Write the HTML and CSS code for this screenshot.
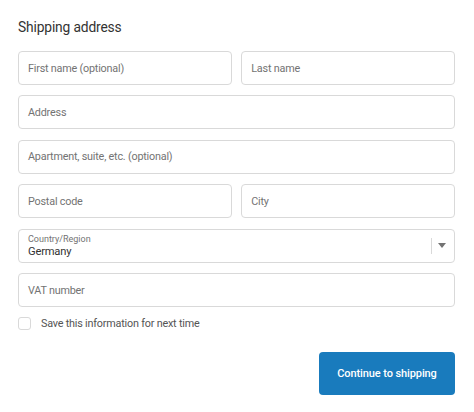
FILE: index.html
```html
<!DOCTYPE html>
<html>
<head>
<meta charset="utf-8">
<link rel="stylesheet" href="styles.css">
</head>
<body>
<div class="form">
  <h2 class="title">Shipping address</h2>
  <div class="fields">
    <div class="row two">
      <div class="field"><span class="ph">First name (optional)</span></div>
      <div class="field"><span class="ph">Last name</span></div>
    </div>
    <div class="field"><span class="ph">Address</span></div>
    <div class="field"><span class="ph">Apartment, suite, etc. (optional)</span></div>
    <div class="row two">
      <div class="field"><span class="ph">Postal code</span></div>
      <div class="field"><span class="ph">City</span></div>
    </div>
    <div class="field select">
      <div class="sel-text">
        <span class="label">Country/Region</span>
        <span class="value">Germany</span>
      </div>
      <div class="sel-arrow">
        <span class="divider"></span>
        <svg width="8" height="5" viewBox="0 0 8 5"><path d="M0 0 L8 0 L4 5 Z" fill="#737373"/></svg>
      </div>
    </div>
    <div class="field"><span class="ph">VAT number</span></div>
  </div>
  <label class="check">
    <span class="box"></span>
    <span class="check-text">Save this information for next time</span>
  </label>
  <div class="actions">
    <button class="btn">Continue to shipping</button>
  </div>
</div>
</body>
</html>
```
FILE: styles.css
```css
* { box-sizing: border-box; }
html, body { margin: 0; padding: 0; background: #fff; }
body {
  font-family: Roboto, "Liberation Sans", Arial, sans-serif;
  color: #333;
}
.form {
  width: 474px;
  padding: 17px 19px 0 18px;
}
.title {
  margin: 0;
  font-size: 13.8px;
  font-weight: normal;
  line-height: 20px;
  letter-spacing: -0.15px;
  color: #333;
}
.fields {
  margin-top: 14px;
  display: flex;
  flex-direction: column;
  gap: 10.4px;
}
.row.two {
  display: grid;
  grid-template-columns: 1fr 1fr;
  gap: 9.5px;
}
.field {
  height: 34px;
  border: 1px solid #d9d9d9;
  border-radius: 4px;
  display: flex;
  align-items: center;
  padding: 0 9px;
  background: #fff;
}
.ph {
  font-size: 10.8px;
  letter-spacing: -0.2px;
  color: #737373;
}
.select {
  justify-content: space-between;
  padding-right: 8px;
  height: 34.5px;
}
.sel-text {
  display: flex;
  flex-direction: column;
}
.label {
  font-size: 9px;
  color: #737373;
  line-height: 11px;
  margin-top: 1px;
}
.value {
  font-size: 11.2px;
  letter-spacing: -0.2px;
  color: #333;
  line-height: 14px;
}
.sel-arrow {
  display: flex;
  align-items: center;
  gap: 6px;
}
.divider {
  width: 1px;
  height: 16px;
  background: #d9d9d9;
}
.sel-arrow svg { display: block; }
.check {
  display: flex;
  align-items: center;
  margin-top: 10px;
  gap: 10px;
}
.box {
  width: 13px;
  height: 13px;
  border: 1px solid #d9d9d9;
  border-radius: 3px;
}
.check-text {
  font-size: 10.8px;
  letter-spacing: -0.2px;
  color: #545454;
}
.actions {
  display: flex;
  justify-content: flex-end;
  margin-top: 22px;
}
.btn {
  width: 136px;
  height: 43px;
  border: none;
  border-radius: 4px;
  background: #197bbd;
  color: #fff;
  font-family: Roboto, "Liberation Sans", Arial, sans-serif;
  font-size: 11px;
  letter-spacing: -0.1px;
  font-weight: 500;
  padding: 0;
}
```
